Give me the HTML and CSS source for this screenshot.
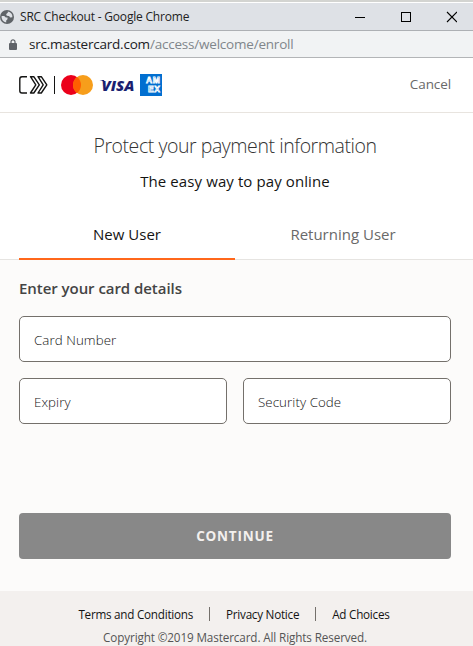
FILE: index.html
```
<!DOCTYPE html>
<html lang="en">

	<head>
		<meta charset="UTF-8">
		<title>SRC Checkout</title>
		<link rel="stylesheet" href="styles.css">
	</head>

	<body>
		<div id="wrap">
			<!-- window bar -->
			<div class="titlebar">
				<svg class="globe" width="14" height="14" viewBox="0 0 14 14">
					<circle cx="7" cy="7" r="7" fill="#5f6368"/>
					<path d="M1.600 6h2.600l1.600 1.600h1.700v1.600L6.200 10.500v2A5.600 5.600 0 0 1 1.600 6zM7.800 1.500v1.300L6.300 4v1.300l1.500.8h1.200l1.200 1.500 2.200-.3A5.600 5.600 0 0 0 7.800 1.500z" fill="#dee1e6"/>
				</svg>
				<span class="window-title">SRC Checkout - Google Chrome</span>
				<svg class="controls" width="102" height="12" viewBox="0 0 102 12" fill="none" stroke="#000">
					<path d="M0 6.500h10"/>
					<rect x="46.500" y="1.500" width="9" height="9"/>
					<path d="M92 1l10 10M102 1L92 11" stroke-width="1.100"/>
				</svg>
			</div>
			<div class="address">
				<svg class="lock" width="8" height="11" viewBox="0 0 8 11">
					<rect y="4" width="8" height="7" rx="1" fill="#5f6368"/>
					<path d="M2 4.500V2.800a2 2 0 0 1 4 0v1.700" fill="none" stroke="#5f6368" stroke-width="1.200"/>
				</svg>
				<span class="host">src.mastercard.com</span><span class="path">/access/welcome/enroll</span>
			</div>

			<!-- logos -->
			<div class="header">
				<svg class="brands" width="144" height="24" viewBox="0 0 144 24">
					<g fill="none" stroke="#141413" stroke-width="1.400" stroke-linejoin="round">
						<path d="M8 3.700H3A2.300 2.300 0 0 0 .8 6v11.700A2.300 2.300 0 0 0 3 20h5"/>
						<path d="M11.500 3.700h3.300l5.500 8.100-5.500 8.200h-3.300l5.300-8.200z"/>
						<path d="M19 3.700h3.300l5.500 8.100-5.500 8.200H19l5.200-8.200z"/>
					</g>
					<path d="M35.500 3v18" stroke="#141413"/>
					<circle cx="52" cy="12" r="10" fill="#eb001b"/>
					<circle cx="64" cy="12" r="10" fill="#f79e1b"/>
					<path d="M58 4a10 10 0 0 1 0 16 10 10 0 0 1 0-16z" fill="#ff5f00"/>
					<path d="M80.500 7h4.500l1.500 4c-1-2-3-3.500-6-4z" fill="#1a1f71"/>
					<text class="visa" x="82.500" y="17.500" textLength="33" lengthAdjust="spacingAndGlyphs">VISA</text>
					<rect x="121" y="1" width="22" height="22" fill="#016fd0"/>
				</svg>
				<div class="amex"><span>AM</span><span>EX</span></div>
				<a class="cancel">Cancel</a>
			</div>

			<div class="intro">
				<h1>Protect your payment information</h1>
				<p>The easy way to pay online</p>
			</div>

			<div class="tabs">
				<div class="tab choose">New User</div>
				<div class="tab">Returning User</div>
			</div>

			<!-- card form -->
			<div class="content">
				<h2>Enter your card details</h2>
				<div class="fields">
					<div class="field wide">Card Number</div>
					<div class="field">Expiry</div>
					<div class="field">Security Code</div>
				</div>
				<div class="btn">CONTINUE</div>
			</div>

			<div class="footer">
				<div class="links">
					<a>Terms and Conditions</a>
					<a>Privacy Notice</a>
					<a>Ad Choices</a>
				</div>
				<p class="copyright">Copyright ©2019 Mastercard. All Rights Reserved.</p>
			</div>
		</div>
	</body>

</html>
```

FILE: styles.css
```
* {
	margin: 0;
	padding: 0;
	box-sizing: border-box;
}

body {
	font-family: "Open Sans", "Noto Sans", sans-serif;
	color: #141413;
	background-color: #fcfbfa;
}

#wrap {
	width: 473px;
	height: 646px;
	overflow: hidden;
	display: flex;
	flex-direction: column;
}

svg {
	display: block;
	flex: none;
}

.titlebar {
	height: 31px;
	border-top: 2px solid #d3d4d1;
	border-bottom: 1px solid #adb0b4;
	box-shadow: inset 0 1px #fff;
	background-color: #dee1e6;
	display: flex;
	align-items: center;
	padding: 1px 16px 0 0;
}

.window-title {
	font-size: 12px;
	letter-spacing: -0.2px;
	color: #222;
	margin-left: 6px;
}

.controls {
	margin-left: auto;
}

.address {
	height: 27px;
	background-color: #f1f3f4;
	border-bottom: 1px solid #b3b5b7;
	display: flex;
	align-items: center;
	padding-left: 9px;
	font-size: 13.5px;
	letter-spacing: -0.21px;
	color: #202124;
}

.host {
	margin-left: 12px;
}

.path {
	color: #80868b;
}

.header {
	height: 55px;
	background-color: #fff;
	border-bottom: 1px solid #e8e4df;
	display: flex;
	align-items: center;
	padding: 0 22px 0 19px;
}

.visa {
	font: italic 800 14px "Open Sans", sans-serif;
	fill: #1a1f71;
}

/* sits on the blue square, cut off at its right edge */
.amex {
	width: 22px;
	height: 22px;
	margin-left: -23px;
	padding: 2px 0 0 6px;
	overflow: hidden;
	font: 700 8.5px/9px "Liberation Sans", sans-serif;
	letter-spacing: 0.6px;
	color: #016fd0;
	-webkit-text-stroke: 0.8px #fff;
}

.amex span {
	display: block;
	height: 9px;
}

.amex span + span {
	margin-left: 2px;
}

.cancel {
	font-size: 13.5px;
	letter-spacing: -0.1px;
	margin: -2px 0 0 auto;
	color: #696969;
}

.intro {
	height: 96px;
	background-color: #fff;
	text-align: center;
	padding: 19px 3px 0 0;
}

h1 {
	font-size: 19.5px;
	line-height: 28px;
	font-weight: 300;
	letter-spacing: -0.44px;
	color: #333;
}

.intro p {
	font-size: 15px;
	line-height: 22px;
	letter-spacing: 0.1px;
	margin-top: 10px;
}

.tabs {
	height: 51px;
	background-color: #fff;
	border-bottom: 1px solid #e6e4e1;
	display: flex;
	padding: 0 22px 0 19px;
}

.tab {
	width: 216px;
	height: 51px;
	text-align: center;
	font-size: 15px;
	line-height: 51px;
	color: #696969;
}

.choose {
	color: #141413;
	border-bottom: 2px solid #ff671b;
}

.content {
	height: 331px;
	padding: 16px 22px 0 19px;
}

h2 {
	font-size: 15px;
	line-height: 24px;
	font-weight: 600;
	letter-spacing: -0.05px;
	color: #444;
}

.fields {
	display: grid;
	grid-template-columns: 208px 208px;
	gap: 16px;
	margin-top: 16px;
}

.field {
	height: 46px;
	background-color: #fff;
	border: 1px solid #74706b;
	border-radius: 5px;
	padding-left: 14px;
	font-size: 13.3px;
	font-weight: 300;
	letter-spacing: 0.08px;
	line-height: 46px;
}

.wide {
	grid-column: span 2;
}

.btn {
	height: 46px;
	margin-top: 89px;
	border-radius: 4px;
	background-color: #888;
	color: #f3f0ee;
	text-align: center;
	font-size: 13.5px;
	font-weight: 700;
	letter-spacing: 0.8px;
	line-height: 46px;
}

.footer {
	height: 55px;
	background-color: #f3f0ee;
	padding: 16px 3px 0 0;
}

.links {
	display: flex;
	justify-content: center;
	font-size: 11.7px;
	letter-spacing: -0.25px;
	line-height: 15px;
	height: 14px;
}

.links a + a {
	border-left: 1px solid #74706b;
	margin-left: 16px;
	padding-left: 16px;
}

.links a:first-child {
	margin-left: -2px;
}

.copyright {
	text-align: center;
	font-size: 11.7px;
	letter-spacing: -0.12px;
	line-height: 16px;
	margin-top: 8px;
	color: #555;
}
```
